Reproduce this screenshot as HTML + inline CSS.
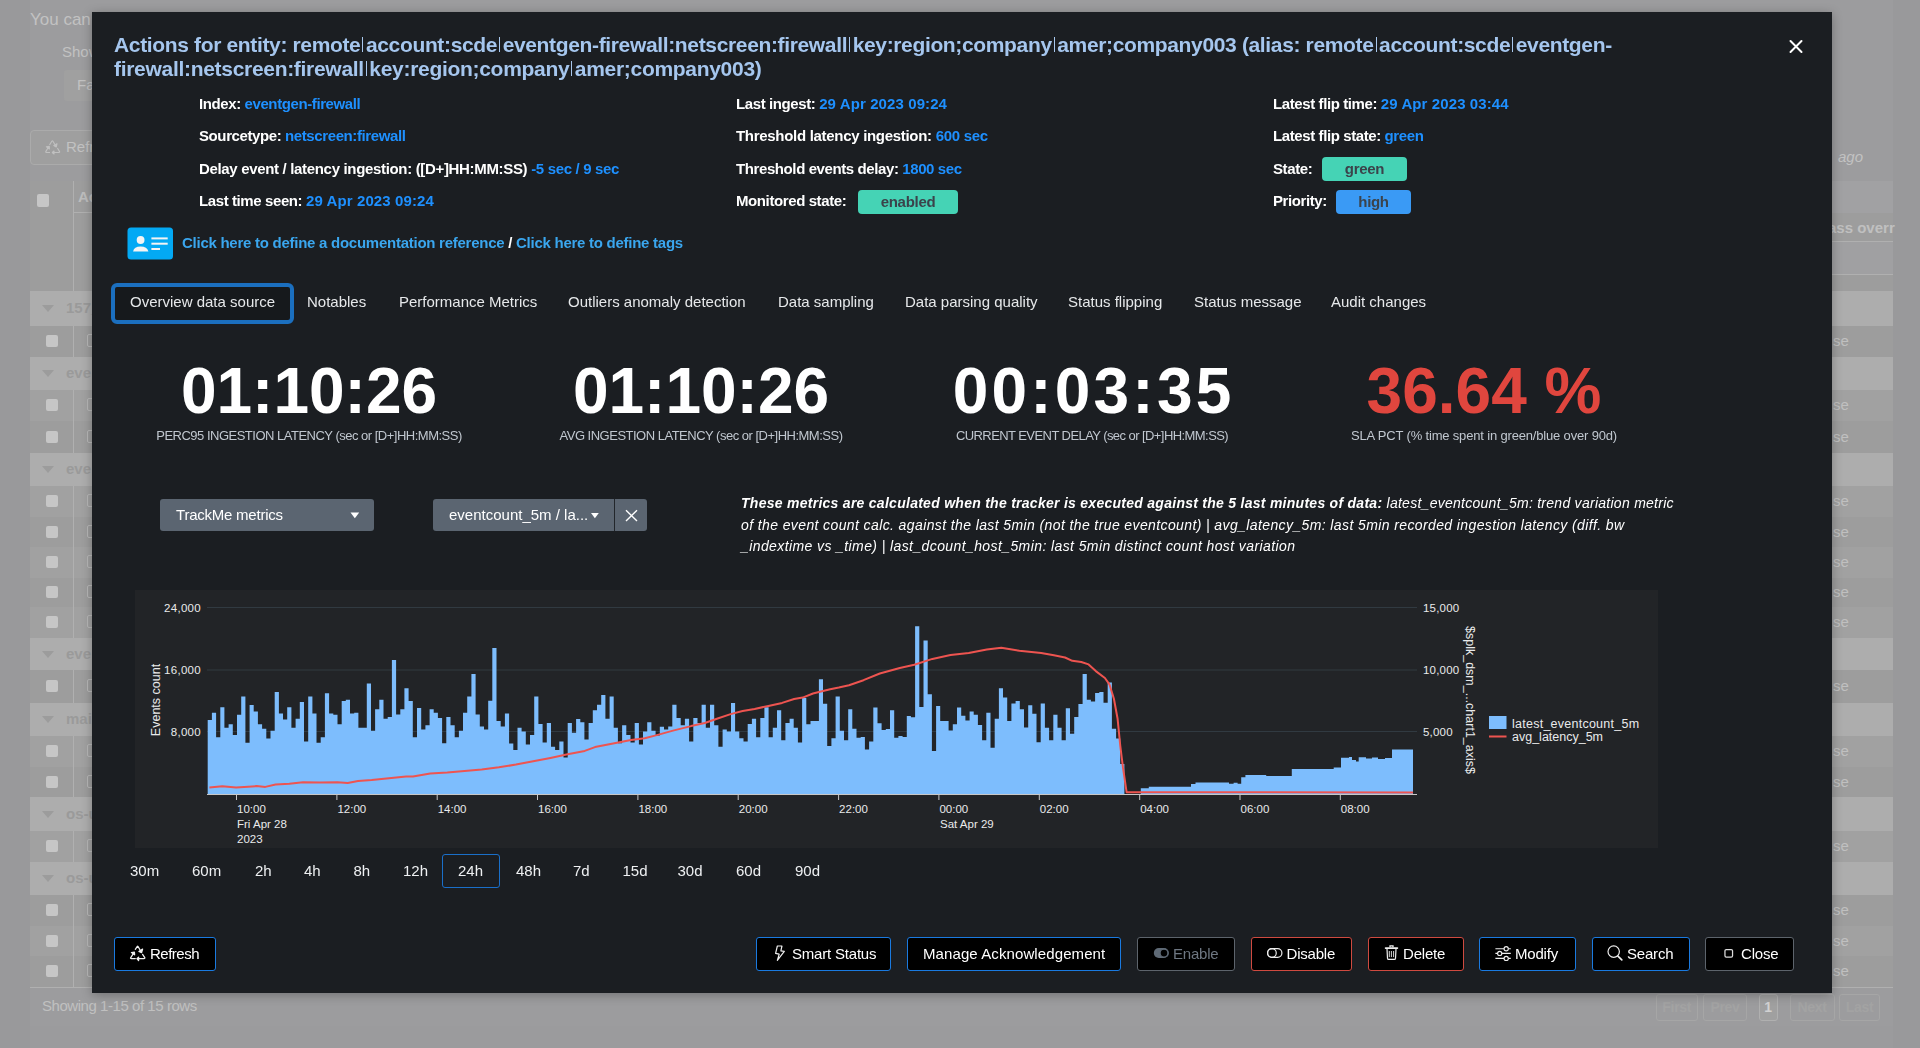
<!DOCTYPE html>
<html><head><meta charset="utf-8">
<style>
*{box-sizing:border-box;margin:0;padding:0}
html,body{width:1920px;height:1048px;overflow:hidden;background:#99999b;font-family:"Liberation Sans",sans-serif}
.a{position:absolute;white-space:nowrap}
.bgt{font-size:15px;line-height:18px;color:#c2c2c2}
#modal{will-change:transform;position:absolute;left:92px;top:12px;width:1740px;height:981px;background:#1b1e22;z-index:2;box-shadow:0 2px 10px rgba(0,0,0,.28)}
#modal .a{z-index:2}
.pp{display:inline-block;width:5.5px;height:15.5px;vertical-align:baseline;background:linear-gradient(90deg,transparent 2px,#a9c8ee 2px,#a9c8ee 3.4px,transparent 3.4px)}
.ttl{color:#a5c6ee;font-weight:bold;font-size:21px;line-height:24px;letter-spacing:-0.35px}
.inf{color:#fff;font-weight:bold;font-size:15px;line-height:18px;letter-spacing:-0.4px}
.inf b{color:#1e90ff}
.inf i{font-style:normal;color:#1e90ff;letter-spacing:0.1px}
.badge{position:absolute;border-radius:4px;color:#3b434b;font-weight:bold;font-size:15px;text-align:center;line-height:24px;letter-spacing:-0.3px}
.tab{color:#e6e8ea;font-size:15px;line-height:18px}
.big{color:#fff;font-weight:bold;font-size:64px;line-height:64px;text-align:center}
.lbl{color:#c0c7cf;font-size:13px;line-height:16px;text-align:center}
.btn{position:absolute;top:925px;height:34px;background:#000;border:1px solid #1a7ae0;border-radius:3px;color:#fff;font-size:15px;line-height:32px;letter-spacing:-0.2px}
.btn svg{position:absolute}
.btn span{position:absolute;top:0}
.tr{color:#eef0f2;font-size:15px;line-height:18px}
</style></head><body>
<div id="bg">
 <div class="a" style="left:30px;top:0;width:1863px;height:1026px;background:#9c9c9e"></div>
 <div class="a bgt" style="left:30px;top:10px;font-size:17px;line-height:20px">You can</div>
 <div class="a bgt" style="left:62px;top:43px">Show</div>
 <div class="a" style="left:64px;top:70px;width:60px;height:31px;background:#a0a0a0;border-radius:3px"></div>
 <div class="a bgt" style="left:77px;top:76px">Fa</div>
 <div class="a" style="left:30px;top:130px;width:90px;height:35px;border:1px solid #ababab;border-radius:4px;background:#9f9f9f"></div>
 <div class="a bgt" style="left:66px;top:138px">Refr</div>
 <svg class="a" style="left:45px;top:139px" width="18" height="17" viewBox="0 0 18 17" fill="none" stroke="#c0c0c0" stroke-width="1.1" stroke-linejoin="round"><path d="M4.5 6 L7 2 Q7.4 1.5 7.8 2 L10 5.8"/><path d="M8.8 6.5L12 4.8L11.2 8Z" fill="#c0c0c0"/><path d="M3.2 8.5L0.8 12.6Q0.5 13.5 1.4 13.5H5"/><path d="M1.4 7.7L4.3 7.4L4.4 10Z" fill="#c0c0c0"/><path d="M12.4 9L14.6 12.6Q14.9 13.5 14 13.5H8.7"/><path d="M7.3 13.5L9 12V15Z" fill="#c0c0c0"/></svg>
 <div class="a" style="left:30px;top:181px;width:1863px;height:110px;background:#9d9d9d"></div>
 <div class="a" style="left:37px;top:194px;width:12px;height:13px;background:#c6c6c6;border-radius:2px"></div>
 <div class="a" style="left:73px;top:181px;width:1px;height:110px;background:#b0b0b0"></div>
 <div class="a" style="left:73px;top:212px;width:1820px;height:1px;background:#b0b0b0"></div>
 <div class="a bgt" style="left:78px;top:188px;font-weight:bold;color:#bdbdbd">Ac</div>
 <div class="a bgt" style="left:1838px;top:148px;font-style:italic;color:#c2c2c2">ago</div>
 <div class="a" style="left:1832px;top:181px;width:61px;height:32px;background:#a1a1a3"></div>
 <div class="a" style="left:1832px;top:242px;width:61px;height:33px;background:#a0a0a2"></div>
 <div class="a" style="left:1832px;top:241px;width:61px;height:1px;background:#b0b0b0"></div>
 <div class="a" style="left:1832px;top:274px;width:61px;height:1px;background:#b0b0b0"></div>
 <div class="a bgt" style="left:1828px;top:219px;font-weight:bold;color:#c0c0c0">ass overr</div>
 <div class="a" style="left:30px;top:291px;width:1863px;height:35px;background:#adadad"></div>
<div class="a" style="left:42px;top:305px;width:0;height:0;border-left:6px solid transparent;border-right:6px solid transparent;border-top:7px solid #9c9c9c"></div>
<div class="a bgt" style="left:66px;top:299px;font-weight:bold;color:#9a9a9a">157_</div>
<div class="a" style="left:30px;top:326px;width:1863px;height:31px;background:#9d9d9d"></div>
<div class="a" style="left:46px;top:335px;width:12px;height:12px;background:#c6c6c6;border-radius:2px"></div>
<div class="a" style="left:73px;top:326px;width:1px;height:31px;background:#b0b0b0"></div>
<div class="a" style="left:87px;top:334px;width:8px;height:13px;border:1px solid #b8b8b8;border-radius:2px"></div>
<div class="a bgt" style="left:1833px;top:332px;color:#c0c0c0">se</div>
<div class="a" style="left:30px;top:357px;width:1863px;height:33px;background:#adadad"></div>
<div class="a" style="left:42px;top:370px;width:0;height:0;border-left:6px solid transparent;border-right:6px solid transparent;border-top:7px solid #9c9c9c"></div>
<div class="a bgt" style="left:66px;top:364px;font-weight:bold;color:#9a9a9a">eve</div>
<div class="a" style="left:30px;top:390px;width:1863px;height:31px;background:#a1a1a1"></div>
<div class="a" style="left:46px;top:399px;width:12px;height:12px;background:#c6c6c6;border-radius:2px"></div>
<div class="a" style="left:73px;top:390px;width:1px;height:31px;background:#b0b0b0"></div>
<div class="a" style="left:87px;top:398px;width:8px;height:13px;border:1px solid #b8b8b8;border-radius:2px"></div>
<div class="a bgt" style="left:1833px;top:396px;color:#c0c0c0">se</div>
<div class="a" style="left:30px;top:421px;width:1863px;height:32px;background:#9d9d9d"></div>
<div class="a" style="left:46px;top:431px;width:12px;height:12px;background:#c6c6c6;border-radius:2px"></div>
<div class="a" style="left:73px;top:421px;width:1px;height:32px;background:#b0b0b0"></div>
<div class="a" style="left:87px;top:430px;width:8px;height:13px;border:1px solid #b8b8b8;border-radius:2px"></div>
<div class="a bgt" style="left:1833px;top:428px;color:#c0c0c0">se</div>
<div class="a" style="left:30px;top:453px;width:1863px;height:33px;background:#adadad"></div>
<div class="a" style="left:42px;top:466px;width:0;height:0;border-left:6px solid transparent;border-right:6px solid transparent;border-top:7px solid #9c9c9c"></div>
<div class="a bgt" style="left:66px;top:460px;font-weight:bold;color:#9a9a9a">eve</div>
<div class="a" style="left:30px;top:486px;width:1863px;height:31px;background:#a1a1a1"></div>
<div class="a" style="left:46px;top:495px;width:12px;height:12px;background:#c6c6c6;border-radius:2px"></div>
<div class="a" style="left:73px;top:486px;width:1px;height:31px;background:#b0b0b0"></div>
<div class="a" style="left:87px;top:494px;width:8px;height:13px;border:1px solid #b8b8b8;border-radius:2px"></div>
<div class="a bgt" style="left:1833px;top:492px;color:#c0c0c0">se</div>
<div class="a" style="left:30px;top:517px;width:1863px;height:30px;background:#9d9d9d"></div>
<div class="a" style="left:46px;top:526px;width:12px;height:12px;background:#c6c6c6;border-radius:2px"></div>
<div class="a" style="left:73px;top:517px;width:1px;height:30px;background:#b0b0b0"></div>
<div class="a" style="left:87px;top:525px;width:8px;height:13px;border:1px solid #b8b8b8;border-radius:2px"></div>
<div class="a bgt" style="left:1833px;top:523px;color:#c0c0c0">se</div>
<div class="a" style="left:30px;top:547px;width:1863px;height:31px;background:#a1a1a1"></div>
<div class="a" style="left:46px;top:556px;width:12px;height:12px;background:#c6c6c6;border-radius:2px"></div>
<div class="a" style="left:73px;top:547px;width:1px;height:31px;background:#b0b0b0"></div>
<div class="a" style="left:87px;top:555px;width:8px;height:13px;border:1px solid #b8b8b8;border-radius:2px"></div>
<div class="a bgt" style="left:1833px;top:553px;color:#c0c0c0">se</div>
<div class="a" style="left:30px;top:578px;width:1863px;height:29px;background:#9d9d9d"></div>
<div class="a" style="left:46px;top:586px;width:12px;height:12px;background:#c6c6c6;border-radius:2px"></div>
<div class="a" style="left:73px;top:578px;width:1px;height:29px;background:#b0b0b0"></div>
<div class="a" style="left:87px;top:585px;width:8px;height:13px;border:1px solid #b8b8b8;border-radius:2px"></div>
<div class="a bgt" style="left:1833px;top:583px;color:#c0c0c0">se</div>
<div class="a" style="left:30px;top:607px;width:1863px;height:31px;background:#a1a1a1"></div>
<div class="a" style="left:46px;top:616px;width:12px;height:12px;background:#c6c6c6;border-radius:2px"></div>
<div class="a" style="left:73px;top:607px;width:1px;height:31px;background:#b0b0b0"></div>
<div class="a" style="left:87px;top:615px;width:8px;height:13px;border:1px solid #b8b8b8;border-radius:2px"></div>
<div class="a bgt" style="left:1833px;top:613px;color:#c0c0c0">se</div>
<div class="a" style="left:30px;top:638px;width:1863px;height:32px;background:#adadad"></div>
<div class="a" style="left:42px;top:651px;width:0;height:0;border-left:6px solid transparent;border-right:6px solid transparent;border-top:7px solid #9c9c9c"></div>
<div class="a bgt" style="left:66px;top:645px;font-weight:bold;color:#9a9a9a">eve</div>
<div class="a" style="left:30px;top:670px;width:1863px;height:33px;background:#9d9d9d"></div>
<div class="a" style="left:46px;top:680px;width:12px;height:12px;background:#c6c6c6;border-radius:2px"></div>
<div class="a" style="left:73px;top:670px;width:1px;height:33px;background:#b0b0b0"></div>
<div class="a" style="left:87px;top:679px;width:8px;height:13px;border:1px solid #b8b8b8;border-radius:2px"></div>
<div class="a bgt" style="left:1833px;top:677px;color:#c0c0c0">se</div>
<div class="a" style="left:30px;top:703px;width:1863px;height:33px;background:#adadad"></div>
<div class="a" style="left:42px;top:716px;width:0;height:0;border-left:6px solid transparent;border-right:6px solid transparent;border-top:7px solid #9c9c9c"></div>
<div class="a bgt" style="left:66px;top:710px;font-weight:bold;color:#9a9a9a">mai</div>
<div class="a" style="left:30px;top:736px;width:1863px;height:31px;background:#a1a1a1"></div>
<div class="a" style="left:46px;top:745px;width:12px;height:12px;background:#c6c6c6;border-radius:2px"></div>
<div class="a" style="left:73px;top:736px;width:1px;height:31px;background:#b0b0b0"></div>
<div class="a" style="left:87px;top:744px;width:8px;height:13px;border:1px solid #b8b8b8;border-radius:2px"></div>
<div class="a bgt" style="left:1833px;top:742px;color:#c0c0c0">se</div>
<div class="a" style="left:30px;top:767px;width:1863px;height:30px;background:#9d9d9d"></div>
<div class="a" style="left:46px;top:776px;width:12px;height:12px;background:#c6c6c6;border-radius:2px"></div>
<div class="a" style="left:73px;top:767px;width:1px;height:30px;background:#b0b0b0"></div>
<div class="a" style="left:87px;top:775px;width:8px;height:13px;border:1px solid #b8b8b8;border-radius:2px"></div>
<div class="a bgt" style="left:1833px;top:773px;color:#c0c0c0">se</div>
<div class="a" style="left:30px;top:797px;width:1863px;height:34px;background:#adadad"></div>
<div class="a" style="left:42px;top:811px;width:0;height:0;border-left:6px solid transparent;border-right:6px solid transparent;border-top:7px solid #9c9c9c"></div>
<div class="a bgt" style="left:66px;top:805px;font-weight:bold;color:#9a9a9a">os-u</div>
<div class="a" style="left:30px;top:831px;width:1863px;height:31px;background:#a1a1a1"></div>
<div class="a" style="left:46px;top:840px;width:12px;height:12px;background:#c6c6c6;border-radius:2px"></div>
<div class="a" style="left:73px;top:831px;width:1px;height:31px;background:#b0b0b0"></div>
<div class="a" style="left:87px;top:839px;width:8px;height:13px;border:1px solid #b8b8b8;border-radius:2px"></div>
<div class="a bgt" style="left:1833px;top:837px;color:#c0c0c0">se</div>
<div class="a" style="left:30px;top:862px;width:1863px;height:33px;background:#adadad"></div>
<div class="a" style="left:42px;top:875px;width:0;height:0;border-left:6px solid transparent;border-right:6px solid transparent;border-top:7px solid #9c9c9c"></div>
<div class="a bgt" style="left:66px;top:869px;font-weight:bold;color:#9a9a9a">os-u</div>
<div class="a" style="left:30px;top:895px;width:1863px;height:31px;background:#9d9d9d"></div>
<div class="a" style="left:46px;top:904px;width:12px;height:12px;background:#c6c6c6;border-radius:2px"></div>
<div class="a" style="left:73px;top:895px;width:1px;height:31px;background:#b0b0b0"></div>
<div class="a" style="left:87px;top:903px;width:8px;height:13px;border:1px solid #b8b8b8;border-radius:2px"></div>
<div class="a bgt" style="left:1833px;top:901px;color:#c0c0c0">se</div>
<div class="a" style="left:30px;top:926px;width:1863px;height:30px;background:#a1a1a1"></div>
<div class="a" style="left:46px;top:935px;width:12px;height:12px;background:#c6c6c6;border-radius:2px"></div>
<div class="a" style="left:73px;top:926px;width:1px;height:30px;background:#b0b0b0"></div>
<div class="a" style="left:87px;top:934px;width:8px;height:13px;border:1px solid #b8b8b8;border-radius:2px"></div>
<div class="a bgt" style="left:1833px;top:932px;color:#c0c0c0">se</div>
<div class="a" style="left:30px;top:956px;width:1863px;height:31px;background:#9d9d9d"></div>
<div class="a" style="left:46px;top:965px;width:12px;height:12px;background:#c6c6c6;border-radius:2px"></div>
<div class="a" style="left:73px;top:956px;width:1px;height:31px;background:#b0b0b0"></div>
<div class="a" style="left:87px;top:964px;width:8px;height:13px;border:1px solid #b8b8b8;border-radius:2px"></div>
<div class="a bgt" style="left:1833px;top:962px;color:#c0c0c0">se</div>
 <div class="a" style="left:30px;top:987px;width:1863px;height:1px;background:#b0b0b0"></div>
 <div class="a bgt" style="left:42px;top:997px;color:#c0c0c0;letter-spacing:-0.45px">Showing 1-15 of 15 rows</div>
 <div class="a" style="left:1655.5px;top:993.5px;width:42.5px;height:27px;border:1px solid #a6a6a6;border-radius:3px;color:#a3a3a3;font-size:14px;font-weight:bold;text-align:center;line-height:25px;letter-spacing:-0.3px">First</div>
 <div class="a" style="left:1703px;top:993.5px;width:44px;height:27px;border:1px solid #a6a6a6;border-radius:3px;color:#a3a3a3;font-size:14px;font-weight:bold;text-align:center;line-height:25px;letter-spacing:-0.3px">Prev</div>
 <div class="a" style="left:1759px;top:993.5px;width:18.5px;height:27px;border:1px solid #b0b0b0;border-radius:3px;background:#a0a0a0;color:#d2d2d2;font-size:14px;font-weight:bold;text-align:center;line-height:25px">1</div>
 <div class="a" style="left:1789.5px;top:993.5px;width:45px;height:27px;border:1px solid #a6a6a6;border-radius:3px;color:#a3a3a3;font-size:14px;font-weight:bold;text-align:center;line-height:25px;letter-spacing:-0.3px">Next</div>
 <div class="a" style="left:1839px;top:993.5px;width:41px;height:27px;border:1px solid #a6a6a6;border-radius:3px;color:#a3a3a3;font-size:14px;font-weight:bold;text-align:center;line-height:25px;letter-spacing:-0.3px">Last</div>
 <div class="a" style="left:30px;top:1026px;width:1863px;height:22px;background:#9b9b9d"></div>
</div>
<div id="modal">
 <div class="a ttl" style="left:22px;top:21px">Actions for entity: remote<i class="pp"></i>account:scde<i class="pp"></i>eventgen-firewall:netscreen:firewall<i class="pp"></i>key:region;company<i class="pp"></i>amer;company003 (alias: remote<i class="pp"></i>account:scde<i class="pp"></i>eventgen-</div>
 <div class="a ttl" style="left:22px;top:45px;letter-spacing:-0.3px">firewall:netscreen:firewall<i class="pp"></i>key:region;company<i class="pp"></i>amer;company003)</div>

 <div class="a inf" style="left:107px;top:83px">Index: <b>eventgen-firewall</b></div>
 <div class="a inf" style="left:107px;top:115px">Sourcetype: <b>netscreen:firewall</b></div>
 <div class="a inf" style="left:107px;top:148px;letter-spacing:-0.33px">Delay event / latency ingestion: ([D+]HH:MM:SS) <b>-5 sec / 9 sec</b></div>
 <div class="a inf" style="left:107px;top:180px">Last time seen: <i>29 Apr 2023 09:24</i></div>

 <div class="a inf" style="left:644px;top:83px">Last ingest: <i>29 Apr 2023 09:24</i></div>
 <div class="a inf" style="left:644px;top:115px;letter-spacing:-0.3px">Threshold latency ingestion: <b>600 sec</b></div>
 <div class="a inf" style="left:644px;top:148px">Threshold events delay: <b>1800 sec</b></div>
 <div class="a inf" style="left:644px;top:180px">Monitored state:</div>
 <div class="badge" style="left:766px;top:178px;width:100px;height:24px;background:#45d3b5">enabled</div>

 <div class="a inf" style="left:1181px;top:83px">Latest flip time: <i>29 Apr 2023 03:44</i></div>
 <div class="a inf" style="left:1181px;top:115px">Latest flip state: <b>green</b></div>
 <div class="a inf" style="left:1181px;top:148px">State:</div>
 <div class="badge" style="left:1230px;top:145px;width:85px;height:24px;background:#45d3b5">green</div>
 <div class="a inf" style="left:1181px;top:180px">Priority:</div>
 <div class="badge" style="left:1244px;top:178px;width:75px;height:24px;background:#3a9af5">high</div>

 <div class="a inf" style="left:90px;top:222px;color:#3aa6ee;letter-spacing:-0.26px">Click here to define a documentation reference <span style="color:#fff">/</span> Click here to define tags</div>

 <div class="a" style="left:19px;top:270.5px;width:183px;height:41px;border:4px solid #1b6fbf;border-radius:6px;background:#16191c"></div>
 <div class="a tab" style="left:38px;top:281px">Overview data source</div>
 <div class="a tab" style="left:215px;top:281px">Notables</div>
 <div class="a tab" style="left:307px;top:281px">Performance Metrics</div>
 <div class="a tab" style="left:476px;top:281px">Outliers anomaly detection</div>
 <div class="a tab" style="left:686px;top:281px">Data sampling</div>
 <div class="a tab" style="left:813px;top:281px">Data parsing quality</div>
 <div class="a tab" style="left:976px;top:281px">Status flipping</div>
 <div class="a tab" style="left:1102px;top:281px">Status message</div>
 <div class="a tab" style="left:1239px;top:281px">Audit changes</div>

 <div class="a big" style="left:17px;top:347px;width:400px">01:10:26</div>
 <div class="a lbl" style="left:17px;top:416px;width:400px;letter-spacing:-0.5px">PERC95 INGESTION LATENCY (sec or [D+]HH:MM:SS)</div>
 <div class="a big" style="left:409px;top:347px;width:400px">01:10:26</div>
 <div class="a lbl" style="left:409px;top:416px;width:400px;letter-spacing:-0.5px">AVG INGESTION LATENCY (sec or [D+]HH:MM:SS)</div>
 <div class="a big" style="left:801.6px;top:347px;width:400px;letter-spacing:3.2px">00:03:35</div>
 <div class="a lbl" style="left:800px;top:416px;width:400px;letter-spacing:-0.57px">CURRENT EVENT DELAY (sec or [D+]HH:MM:SS)</div>
 <div class="a big" style="left:1192px;top:347px;width:400px;color:#e0463e">36.64 %</div>
 <div class="a lbl" style="left:1192px;top:416px;width:400px;letter-spacing:-0.17px">SLA PCT (% time spent in green/blue over 90d)</div>

 <div class="a" style="left:68px;top:487px;width:214px;height:32px;background:#5b6571;border-radius:3px"></div>
 <div class="a tr" style="left:84px;top:494px;color:#fff;letter-spacing:-0.23px">TrackMe metrics</div>
 <div class="a" style="left:341px;top:487px;width:214px;height:32px;background:#5b6571;border-radius:3px"></div>
 <div class="a" style="left:522px;top:487px;width:1px;height:32px;background:#22262b"></div>
 <div class="a tr" style="left:357px;top:494px;color:#fff">eventcount_5m / la...</div>

 <div class="a" style="left:649px;top:481px;color:#fff;font-style:italic;font-size:14px;line-height:21.5px;white-space:nowrap">
  <div id="d1" style="letter-spacing:0.27px"><b>These metrics are calculated when the tracker is executed against the 5 last minutes of data:</b> latest_eventcount_5m: trend variation metric</div>
  <div id="d2" style="letter-spacing:0.39px">of the event count calc. against the last 5min (not the true eventcount) | avg_latency_5m: last 5min recorded ingestion latency (diff. bw</div>
  <div id="d3" style="letter-spacing:0.4px">_indextime vs _time) | last_dcount_host_5min: last 5min distinct count host variation</div>
 </div>

 <div class="a" style="left:350px;top:842px;width:58px;height:34px;border:1px solid #1a6fc9;border-radius:3px"></div>
 <div class="a tr" style="left:38px;top:849.5px">30m</div>
 <div class="a tr" style="left:100px;top:849.5px">60m</div>
 <div class="a tr" style="left:163px;top:849.5px">2h</div>
 <div class="a tr" style="left:212px;top:849.5px">4h</div>
 <div class="a tr" style="left:261.5px;top:849.5px">8h</div>
 <div class="a tr" style="left:311px;top:849.5px">12h</div>
 <div class="a tr" style="left:366px;top:849.5px">24h</div>
 <div class="a tr" style="left:424px;top:849.5px">48h</div>
 <div class="a tr" style="left:481px;top:849.5px">7d</div>
 <div class="a tr" style="left:530.5px;top:849.5px">15d</div>
 <div class="a tr" style="left:585.5px;top:849.5px">30d</div>
 <div class="a tr" style="left:644px;top:849.5px">60d</div>
 <div class="a tr" style="left:703px;top:849.5px">90d</div>

 <div class="btn" style="left:22px;width:102px">
  <span style="left:35px;letter-spacing:-0.5px">Refresh</span></div>
 <div class="btn" style="left:664px;width:135px">
  <span style="left:35px">Smart Status</span></div>
 <div class="btn" style="left:815px;width:214px"><span style="left:15px;letter-spacing:0.1px">Manage Acknowledgement</span></div>
 <div class="btn" style="left:1045px;width:98px;border-color:#5d646c;color:#6e7782">
  <span style="left:35px">Enable</span></div>
 <div class="btn" style="left:1159px;width:101px;border-color:#cf4a40">
  <span style="left:34.5px">Disable</span></div>
 <div class="btn" style="left:1276px;width:96px;border-color:#cf4a40">
  <span style="left:34px">Delete</span></div>
 <div class="btn" style="left:1387px;width:97px">
  <span style="left:35px">Modify</span></div>
 <div class="btn" style="left:1500px;width:98px">
  <span style="left:34px">Search</span></div>
 <div class="btn" style="left:1613px;width:89px;border-color:#5d646c">
  <span style="left:35px">Close</span></div>
</div>
<svg class="a" style="left:135px;top:590px;z-index:3" width="1523" height="258" viewBox="135 590 1523 258">
<rect x="135" y="590" width="1523" height="258" fill="#222427"/>
<g stroke="#313a41" stroke-width="1"><line x1="207" y1="607.5" x2="1417" y2="607.5"/><line x1="207" y1="670" x2="1417" y2="670"/><line x1="207" y1="731.5" x2="1417" y2="731.5"/></g>
<path d="M207.7 794 L207.7 720.1 L211.9 720.1 L211.9 712.7 L216.1 712.7 L216.1 737.3 L220.3 737.3 L220.3 707.2 L224.4 707.2 L224.4 727.7 L228.6 727.7 L228.6 724.2 L232.8 724.2 L232.8 735.1 L237.0 735.1 L237.0 714.8 L241.2 714.8 L241.2 696.4 L245.4 696.4 L245.4 742.8 L249.6 742.8 L249.6 705.0 L253.7 705.0 L253.7 711.5 L257.9 711.5 L257.9 724.2 L262.1 724.2 L262.1 728.7 L266.3 728.7 L266.3 738.5 L270.5 738.5 L270.5 730.8 L274.7 730.8 L274.7 692.1 L278.9 692.1 L278.9 713.6 L283.0 713.6 L283.0 719.6 L287.2 719.6 L287.2 707.2 L291.4 707.2 L291.4 727.7 L295.6 727.7 L295.6 718.7 L299.8 718.7 L299.8 702.1 L304.0 702.1 L304.0 741.6 L308.2 741.6 L308.2 696.4 L312.4 696.4 L312.4 713.6 L316.5 713.6 L316.5 742.8 L320.7 742.8 L320.7 737.3 L324.9 737.3 L324.9 693.3 L329.1 693.3 L329.1 713.6 L333.3 713.6 L333.3 714.8 L337.5 714.8 L337.5 724.2 L341.7 724.2 L341.7 701.1 L345.8 701.1 L345.8 699.7 L350.0 699.7 L350.0 713.6 L354.2 713.6 L354.2 712.7 L358.4 712.7 L358.4 727.7 L362.6 727.7 L362.6 727.7 L366.8 727.7 L366.8 683.5 L371.0 683.5 L371.0 730.8 L375.1 730.8 L375.1 709.3 L379.3 709.3 L379.3 699.7 L383.5 699.7 L383.5 718.7 L387.7 718.7 L387.7 717.0 L391.9 717.0 L391.9 660.0 L396.1 660.0 L396.1 714.5 L400.3 714.5 L400.3 709.3 L404.4 709.3 L404.4 688.2 L408.6 688.2 L408.6 701.1 L412.8 701.1 L412.8 737.3 L417.0 737.3 L417.0 708.1 L421.2 708.1 L421.2 729.6 L425.4 729.6 L425.4 725.3 L429.6 725.3 L429.6 709.3 L433.7 709.3 L433.7 712.7 L437.9 712.7 L437.9 717.9 L442.1 717.9 L442.1 743.3 L446.3 743.3 L446.3 717.0 L450.5 717.0 L450.5 725.3 L454.7 725.3 L454.7 737.3 L458.9 737.3 L458.9 730.8 L463.0 730.8 L463.0 712.7 L467.2 712.7 L467.2 696.4 L471.4 696.4 L471.4 674.1 L475.6 674.1 L475.6 714.5 L479.8 714.5 L479.8 726.5 L484.0 726.5 L484.0 729.6 L488.2 729.6 L488.2 700.7 L492.3 700.7 L492.3 648.0 L496.5 648.0 L496.5 721.0 L500.7 721.0 L500.7 726.5 L504.9 726.5 L504.9 713.6 L509.1 713.6 L509.1 743.6 L513.3 743.6 L513.3 750.0 L517.5 750.0 L517.5 727.7 L521.6 727.7 L521.6 731.6 L525.8 731.6 L525.8 744.5 L530.0 744.5 L530.0 735.1 L534.2 735.1 L534.2 696.4 L538.4 696.4 L538.4 723.9 L542.6 723.9 L542.6 742.4 L546.8 742.4 L546.8 723.0 L551.0 723.0 L551.0 746.7 L555.1 746.7 L555.1 750.0 L559.3 750.0 L559.3 741.6 L563.5 741.6 L563.5 757.4 L567.7 757.4 L567.7 723.0 L571.9 723.0 L571.9 732.8 L576.1 732.8 L576.1 719.1 L580.3 719.1 L580.3 722.2 L584.4 722.2 L584.4 739.4 L588.6 739.4 L588.6 723.0 L592.8 723.0 L592.8 710.2 L597.0 710.2 L597.0 704.7 L601.2 704.7 L601.2 695.0 L605.4 695.0 L605.4 718.7 L609.6 718.7 L609.6 696.4 L613.7 696.4 L613.7 727.7 L617.9 727.7 L617.9 743.3 L622.1 743.3 L622.1 725.3 L626.3 725.3 L626.3 735.1 L630.5 735.1 L630.5 742.4 L634.7 742.4 L634.7 723.0 L638.9 723.0 L638.9 744.5 L643.0 744.5 L643.0 731.6 L647.2 731.6 L647.2 722.2 L651.4 722.2 L651.4 730.8 L655.6 730.8 L655.6 735.4 L659.8 735.4 L659.8 726.8 L664.0 726.8 L664.0 729.6 L668.2 729.6 L668.2 726.5 L672.3 726.5 L672.3 704.7 L676.5 704.7 L676.5 717.9 L680.7 717.9 L680.7 725.3 L684.9 725.3 L684.9 718.7 L689.1 718.7 L689.1 741.6 L693.3 741.6 L693.3 717.9 L697.5 717.9 L697.5 723.0 L701.6 723.0 L701.6 704.7 L705.8 704.7 L705.8 727.7 L710.0 727.7 L710.0 704.7 L714.2 704.7 L714.2 725.3 L718.4 725.3 L718.4 746.7 L722.6 746.7 L722.6 729.6 L726.8 729.6 L726.8 731.6 L731.0 731.6 L731.0 702.9 L735.1 702.9 L735.1 731.6 L739.3 731.6 L739.3 738.2 L743.5 738.2 L743.5 741.6 L747.7 741.6 L747.7 723.9 L751.9 723.9 L751.9 718.7 L756.1 718.7 L756.1 737.3 L760.3 737.3 L760.3 717.9 L764.4 717.9 L764.4 707.2 L768.6 707.2 L768.6 737.3 L772.8 737.3 L772.8 727.7 L777.0 727.7 L777.0 710.2 L781.2 710.2 L781.2 740.2 L785.4 740.2 L785.4 723.0 L789.6 723.0 L789.6 718.7 L793.7 718.7 L793.7 727.7 L797.9 727.7 L797.9 742.4 L802.1 742.4 L802.1 698.1 L806.3 698.1 L806.3 724.2 L810.5 724.2 L810.5 721.0 L814.7 721.0 L814.7 721.0 L818.9 721.0 L818.9 679.2 L823.0 679.2 L823.0 703.8 L827.2 703.8 L827.2 745.9 L831.4 745.9 L831.4 738.2 L835.6 738.2 L835.6 696.4 L839.8 696.4 L839.8 730.8 L844.0 730.8 L844.0 740.2 L848.2 740.2 L848.2 709.3 L852.3 709.3 L852.3 728.7 L856.5 728.7 L856.5 737.8 L860.7 737.8 L860.7 736.9 L864.9 736.9 L864.9 749.6 L869.1 749.6 L869.1 741.4 L873.3 741.4 L873.3 707.4 L877.5 707.4 L877.5 723.3 L881.6 723.3 L881.6 730.0 L885.8 730.0 L885.8 729.1 L890.0 729.1 L890.0 710.3 L894.2 710.3 L894.2 737.8 L898.4 737.8 L898.4 736.0 L902.6 736.0 L902.6 736.9 L906.8 736.9 L906.8 716.1 L910.9 716.1 L910.9 717.3 L915.1 717.3 L915.1 626.3 L919.3 626.3 L919.3 707.0 L923.5 707.0 L923.5 640.5 L927.7 640.5 L927.7 694.3 L931.9 694.3 L931.9 751.0 L936.1 751.0 L936.1 706.1 L940.2 706.1 L940.2 720.9 L944.4 720.9 L944.4 720.9 L948.6 720.9 L948.6 730.6 L952.8 730.6 L952.8 724.2 L957.0 724.2 L957.0 707.4 L961.2 707.4 L961.2 715.7 L965.4 715.7 L965.4 720.6 L969.6 720.6 L969.6 711.5 L973.7 711.5 L973.7 714.8 L977.9 714.8 L977.9 725.1 L982.1 725.1 L982.1 740.2 L986.3 740.2 L986.3 712.8 L990.5 712.8 L990.5 747.8 L994.7 747.8 L994.7 718.8 L998.9 718.8 L998.9 688.3 L1003.0 688.3 L1003.0 697.6 L1007.2 697.6 L1007.2 720.9 L1011.4 720.9 L1011.4 703.4 L1015.6 703.4 L1015.6 701.0 L1019.8 701.0 L1019.8 709.2 L1024.0 709.2 L1024.0 727.5 L1028.2 727.5 L1028.2 705.2 L1032.3 705.2 L1032.3 713.7 L1036.5 713.7 L1036.5 742.3 L1040.7 742.3 L1040.7 703.4 L1044.9 703.4 L1044.9 727.8 L1049.1 727.8 L1049.1 740.2 L1053.3 740.2 L1053.3 714.8 L1057.5 714.8 L1057.5 727.8 L1061.6 727.8 L1061.6 740.2 L1065.8 740.2 L1065.8 708.3 L1070.0 708.3 L1070.0 733.8 L1074.2 733.8 L1074.2 717.0 L1078.4 717.0 L1078.4 703.9 L1082.6 703.9 L1082.6 674.0 L1086.8 674.0 L1086.8 699.7 L1090.9 699.7 L1090.9 701.6 L1095.1 701.6 L1095.1 693.0 L1099.3 693.0 L1099.3 691.9 L1103.5 691.9 L1103.5 702.8 L1107.7 702.8 L1107.7 682.5 L1111.9 682.5 L1111.9 728.7 L1116.1 728.7 L1116.1 738.4 L1120.2 738.4 L1120.2 764.1 L1124.4 764.1 L1124.4 794 L1140.8 794 L1140.8 788.2 L1148.8 788.2 L1148.8 786.8 L1191.0 786.8 L1191.0 784.0 L1195.5 784.0 L1195.5 782.6 L1229.0 782.6 L1229.0 783.7 L1233.6 783.7 L1233.6 782.8 L1237.6 782.8 L1237.6 783.7 L1241.2 783.7 L1241.2 777.2 L1245.4 777.2 L1245.4 775.0 L1266.2 775.0 L1266.2 775.9 L1291.8 775.9 L1291.8 769.0 L1333.7 769.0 L1333.7 767.6 L1341.0 767.6 L1341.0 757.7 L1349.0 757.7 L1349.0 757.0 L1352.0 757.0 L1352.0 760.0 L1356.0 760.0 L1356.0 761.5 L1358.7 761.5 L1358.7 757.3 L1366.0 757.3 L1366.0 758.5 L1372.0 758.5 L1372.0 757.5 L1378.0 757.5 L1378.0 759.0 L1385.0 759.0 L1385.0 758.0 L1392.0 758.0 L1392.0 749.6 L1413.0 749.6 L1413 794 Z" fill="#7dbdfd"/>
<path d="M209.4 787.4 L222.3 786.2 L236.1 787.4 L256.7 786.1 L265.3 786.9 L275.6 784.5 L289.3 783.7 L303.0 782.3 L320.2 782.6 L337.4 782.3 L347.7 783.1 L358.0 780.9 L371.7 780.1 L388.9 778.3 L406.1 776.6 L413.0 776.6 L430.2 773.4 L447.3 772.5 L464.5 771.1 L481.7 769.4 L498.9 767.3 L516.0 764.6 L533.2 761.2 L550.4 757.9 L567.6 754.3 L584.7 750.9 L595.0 747.1 L610.5 744.0 L631.0 739.9 L644.7 738.2 L656.8 735.1 L673.9 730.4 L691.1 726.1 L704.8 723.0 L716.9 718.7 L730.6 714.1 L742.6 711.0 L754.6 709.0 L768.4 705.9 L782.1 702.9 L794.1 699.0 L802.7 697.6 L813.0 693.5 L819.9 691.8 L830.2 689.2 L838.8 687.5 L849.0 685.2 L863.5 680.2 L879.8 673.5 L899.8 668.0 L914.3 664.7 L932.4 658.9 L950.5 655.0 L968.7 653.1 L986.8 649.5 L1001.3 647.7 L1019.4 650.8 L1041.2 653.0 L1053.9 655.3 L1065.0 657.5 L1072.3 660.8 L1081.3 662.0 L1088.6 664.4 L1095.8 671.1 L1104.9 678.0 L1109.4 684.3 L1113.9 698.8 L1117.6 718.8 L1120.3 746.0 L1123.0 767.7 L1126.6 792.2 L1413.0 792.5" fill="none" stroke="#ee5450" stroke-width="2" stroke-linejoin="round"/>
<line x1="207" y1="794.5" x2="1417" y2="794.5" stroke="#c8c8c8" stroke-width="1"/>
<g font-family="Liberation Sans, sans-serif" font-size="11.5" fill="#e9eaeb">
<line x1="236.5" y1="794" x2="236.5" y2="800" stroke="#c8c8c8" stroke-width="1"/><text x="237.0" y="813">10:00</text><line x1="336.9" y1="794" x2="336.9" y2="800" stroke="#c8c8c8" stroke-width="1"/><text x="337.4" y="813">12:00</text><line x1="437.2" y1="794" x2="437.2" y2="800" stroke="#c8c8c8" stroke-width="1"/><text x="437.7" y="813">14:00</text><line x1="537.5" y1="794" x2="537.5" y2="800" stroke="#c8c8c8" stroke-width="1"/><text x="538.0" y="813">16:00</text><line x1="637.9" y1="794" x2="637.9" y2="800" stroke="#c8c8c8" stroke-width="1"/><text x="638.4" y="813">18:00</text><line x1="738.2" y1="794" x2="738.2" y2="800" stroke="#c8c8c8" stroke-width="1"/><text x="738.8" y="813">20:00</text><line x1="838.6" y1="794" x2="838.6" y2="800" stroke="#c8c8c8" stroke-width="1"/><text x="839.1" y="813">22:00</text><line x1="938.9" y1="794" x2="938.9" y2="800" stroke="#c8c8c8" stroke-width="1"/><text x="939.4" y="813">00:00</text><line x1="1039.3" y1="794" x2="1039.3" y2="800" stroke="#c8c8c8" stroke-width="1"/><text x="1039.8" y="813">02:00</text><line x1="1139.7" y1="794" x2="1139.7" y2="800" stroke="#c8c8c8" stroke-width="1"/><text x="1140.2" y="813">04:00</text><line x1="1240.0" y1="794" x2="1240.0" y2="800" stroke="#c8c8c8" stroke-width="1"/><text x="1240.5" y="813">06:00</text><line x1="1340.3" y1="794" x2="1340.3" y2="800" stroke="#c8c8c8" stroke-width="1"/><text x="1340.8" y="813">08:00</text>
<text x="237" y="828">Fri Apr 28</text><text x="237" y="843">2023</text><text x="940" y="828">Sat Apr 29</text>
<g text-anchor="end" letter-spacing="0.3"><text x="201" y="611.5">24,000</text><text x="201" y="674">16,000</text><text x="201" y="735.5">8,000</text></g>
<g letter-spacing="0.2"><text x="1423" y="611.5">15,000</text><text x="1423" y="674">10,000</text><text x="1423" y="735.5">5,000</text></g>
<text transform="translate(160,700) rotate(-90)" text-anchor="middle" font-size="12.5">Events count</text>
<text transform="translate(1465.5,700) rotate(90)" text-anchor="middle" font-size="12.5">$splk_dsm_...chart1_axis$</text>
<rect x="1489" y="716" width="17.5" height="13" fill="#7dbdfd"/>
<line x1="1489" y1="736.5" x2="1506.5" y2="736.5" stroke="#ee5450" stroke-width="2"/>
<text x="1512" y="728" font-size="12.5" letter-spacing="0.25">latest_eventcount_5m</text>
<text x="1512" y="741" font-size="12.5">avg_latency_5m</text>
</g>
</svg>
<svg class="a" style="left:0;top:0;z-index:5" width="1920" height="1048" viewBox="0 0 1920 1048">
 <path d="M1790.5 41L1801.5 52M1801.5 41L1790.5 52" stroke="#fff" stroke-width="2" stroke-linecap="round"/>
 <rect x="127.5" y="227.5" width="45.5" height="32" rx="3.5" fill="#03a9f4"/>
 <circle cx="140.6" cy="240" r="3.9" fill="#f4f4f4"/>
 <path d="M133.1 251.6 Q134 246.6 140.6 246.6 Q147.2 246.6 148.4 251.6 Z" fill="#f4f4f4"/>
 <rect x="151.4" y="237.4" width="16.3" height="2" fill="#f4f4f4"/>
 <rect x="151.4" y="242.7" width="16.3" height="2" fill="#f4f4f4"/>
 <rect x="151.4" y="248" width="8.6" height="2" fill="#f4f4f4"/>
 <path d="M350.5 512.6H359.2L354.85 518.3Z" fill="#fff"/>
 <path d="M591 513H598.8L594.9 518.2Z" fill="#fff"/>
 <path d="M626 510.3L637 521M637 510.3L626 521" stroke="#fff" stroke-width="1.4"/>
 <g fill="none" stroke="#f0f0f0" stroke-width="1.25" stroke-linejoin="round" stroke-linecap="round">
  <path d="M135.3 949.3 L137.3 946.3 Q137.6 945.9 137.9 946.3 L140.3 950.4"/>
  <path d="M138.9 951.5 L142.6 949.1 L141.6 952.6 Z" fill="#f0f0f0"/>
  <path d="M133.3 953.7 L130.6 957.8 Q130.3 958.6 131.3 958.6 L135.3 958.6"/>
  <path d="M131.4 952.5 L134.4 952.1 L134.6 954.8 Z" fill="#f0f0f0"/>
  <path d="M142.6 954.3 L144.8 957.6 Q145 958.6 144 958.6 L138.5 958.6"/>
  <path d="M136.9 958.6 L138.6 957.1 L138.6 960.6 Z" fill="#f0f0f0"/>
 </g>
 <path d="M777.35 946 L781.96 946 L780.9 950.8 L784.3 951.4 L777.35 960.3 L779.2 954.2 L775.6 953.3 Z" fill="none" stroke="#f0f0f0" stroke-width="1.2" stroke-linejoin="round"/>
 <rect x="1153.8" y="948.1" width="15.1" height="9.9" rx="4.95" fill="#5f6a76"/>
 <circle cx="1164" cy="953.05" r="3.9" fill="#000" stroke="#5f6a76" stroke-width="1.1"/>
 <g fill="none" stroke="#eee" stroke-width="1.2">
  <rect x="1267.6" y="948.7" width="14.3" height="8.7" rx="4.35"/>
  <circle cx="1271.9" cy="953.05" r="4.35"/>
 </g>
 <g fill="none" stroke="#eee">
  <path d="M1385.6 948.1H1397.4" stroke-width="1.7" stroke-linecap="round"/>
  <path d="M1390 947.3V945.8H1393V947.3" stroke-width="1.3"/>
  <path d="M1387 948.9 L1387.5 958.4 Q1387.6 959.4 1388.6 959.4 H1394.4 Q1395.4 959.4 1395.5 958.4 L1396 948.9" stroke-width="1.2"/>
  <path d="M1389.3 951V957.1M1391.4 951V957.1M1393.6 951V957.1" stroke-width="0.9"/>
 </g>
 <g fill="none" stroke="#eee" stroke-width="1.15">
  <path d="M1495.4 948.7H1504M1508.4 948.7H1510.8M1495.4 953.4H1497.5M1501.9 953.4H1510.8M1495.4 958.4H1504M1508.4 958.4H1510.8"/>
  <circle cx="1506.2" cy="948.7" r="2.1"/><circle cx="1499.7" cy="953.4" r="2.1"/><circle cx="1506.2" cy="958.4" r="2.1"/>
 </g>
 <g fill="none" stroke="#eee">
  <circle cx="1613.7" cy="951.6" r="5.7" stroke-width="1.2"/>
  <path d="M1617.9 956.1L1621.8 959.8" stroke-width="1.7" stroke-linecap="round"/>
 </g>
 <rect x="1724.95" y="949.55" width="7.6" height="7.6" rx="1.3" fill="none" stroke="#ddd" stroke-width="1.25"/>
</svg>
</body></html>
